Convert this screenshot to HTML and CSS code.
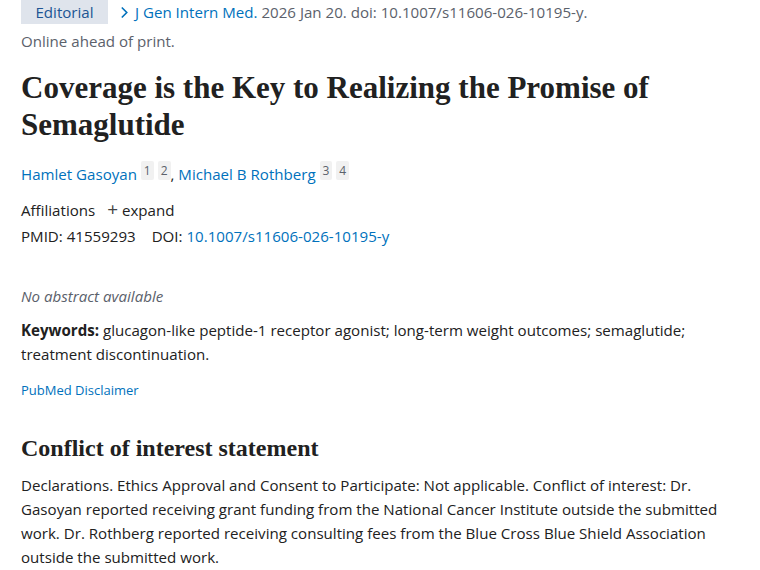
FILE: index.html
```html
<!DOCTYPE html>
<html lang="en">
<head>
<meta charset="utf-8">
<title>Coverage is the Key to Realizing the Promise of Semaglutide</title>
<link rel="stylesheet" href="styles.css">
</head>
<body>
<main class="article">
  <div class="cite-row">
    <span class="badge">Editorial</span>
    <span class="cite"><a class="journal" href="#"><svg class="chev" viewBox="0 0 10 14" width="9" height="13"><path d="M2 1.5 L7.5 7 L2 12.5" fill="none" stroke="currentColor" stroke-width="1.8"/></svg>J Gen Intern Med.</a> 2026 Jan 20. doi: 10.1007/s11606-026-10195-y.</span>
  </div>
  <div class="ahead">Online ahead of print.</div>

  <h1 class="title">Coverage is the Key to Realizing the Promise of Semaglutide</h1>

  <div class="authors">
    <a href="#">Hamlet Gasoyan</a> <sup class="aff">1</sup> <sup class="aff">2</sup>, <a href="#">Michael B Rothberg</a> <sup class="aff">3</sup> <sup class="aff">4</sup>
  </div>

  <div class="affil">Affiliations <span class="expand"><span class="plus">+</span> expand</span></div>
  <div class="ids">PMID: 41559293 <span class="doi">DOI: <a href="#">10.1007/s11606-026-10195-y</a></span></div>

  <p class="noabs">No abstract available</p>
  <p class="keywords"><strong>Keywords:</strong> glucagon-like peptide-1 receptor agonist; long-term weight outcomes; semaglutide; treatment discontinuation.</p>
  <a class="disclaimer" href="#">PubMed Disclaimer</a>

  <h2 class="section">Conflict of interest statement</h2>
  <p class="coi">Declarations. Ethics Approval and Consent to Participate: Not applicable. Conflict of interest: Dr. Gasoyan reported receiving grant funding from the National Cancer Institute outside the submitted work. Dr. Rothberg reported receiving consulting fees from the Blue Cross Blue Shield Association outside the submitted work.</p>
</main>
</body>
</html>
```

FILE: styles.css
```css
html, body {
  margin: 0;
  padding: 0;
  background: #ffffff;
}
body {
  font-family: "Open Sans", "Noto Sans", sans-serif;
  font-size: 15.1px;
  color: #212121;
}
a {
  color: #0071bc;
  text-decoration: none;
}
.article {
  width: 720px;
  padding: 0 0 0 21px;
}
.cite-row {
  display: flex;
  align-items: center;
  height: 24px;
  gap: 12px;
}
.badge {
  background: #dfe4ec;
  color: #205493;
  height: 24px;
  width: 87px;
  box-sizing: border-box;
  display: flex;
  align-items: center;
  justify-content: center;
}
.cite {
  color: #5b616b;
}
.journal {
  color: #0071bc;
}
.chev {
  margin-right: 6px;
  vertical-align: -1px;
}
.ahead {
  color: #5b616b;
  margin-top: 5px;
  line-height: 24px;
}
.title {
  font-family: "Liberation Serif", "Times New Roman", serif;
  font-weight: bold;
  font-size: 31px;
  line-height: 37px;
  margin: 16px 0 0;
  color: #212121;
}
.authors {
  margin-top: 16px;
  line-height: 24px;
}
.aff {
  font-size: 12px;
  background: #f1f1f1;
  color: #5b616b;
  padding: 1px 3px;
  border-radius: 2px;
  vertical-align: 5px;
}
.affil {
  margin-top: 12px;
  line-height: 24px;
}
.expand {
  margin-left: 8px;
}
.plus {
  font-size: 19px;
  line-height: 1;
  color: #444;
}
.ids {
  line-height: 24px;
  margin-top: 2px;
}
.doi {
  margin-left: 12px;
}
.noabs {
  font-style: italic;
  color: #5b616b;
  margin: 36px 0 0;
  line-height: 24px;
}
.keywords {
  margin: 10px 0 0;
  line-height: 24px;
}
.disclaimer {
  display: block;
  font-size: 13px;
  margin-top: 14px;
  line-height: 20px;
}
.section {
  font-family: "Liberation Serif", "Times New Roman", serif;
  font-weight: bold;
  font-size: 24px;
  line-height: 30px;
  margin: 33px 0 0;
  color: #212121;
}
.coi {
  margin: 10px 0 0;
  line-height: 24px;
}
```
